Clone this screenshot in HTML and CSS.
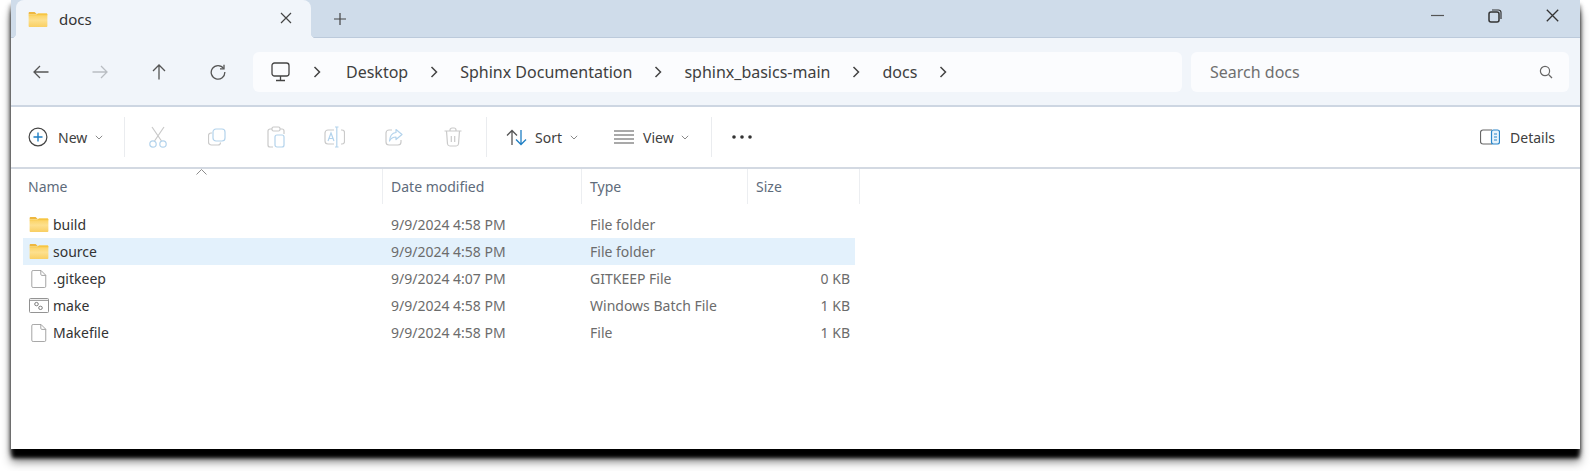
FILE: index.html
```html
<!DOCTYPE html>
<html lang="en">
<head>
    <meta charset="UTF-8">
    <title>docs - File Explorer</title>
    <link rel="stylesheet" href="styles.css">
</head>
<body>
    <svg class="sprite" width="0" height="0">
        <defs>
            <linearGradient id="folderFill" x1="0" y1="0" x2="0" y2="1">
                <stop offset="0" stop-color="#fbd05a"/>
                <stop offset="0.5" stop-color="#fde08e"/>
                <stop offset="1" stop-color="#f9cf63"/>
            </linearGradient>
            <symbol id="folder" viewBox="0 0 20 16">
                <path d="M0 1.2C0 .5.5 0 1.2 0h5.2l2.2 2.2H0z" fill="#eeb73f"/>
                <path d="M0 2.6h8.4L10 1.6h8.8c.7 0 1.2.5 1.2 1.2v12c0 .7-.5 1.2-1.2 1.2H1.2C.5 16 0 15.500 0 14.800z" fill="url(#folderFill)"/>
                <path d="M0 2.600h8.600L10 1.600h8.800c.7 0 1.200.5 1.200 1.200v.6H0z" fill="#f6c544"/>
            </symbol>
            <symbol id="page" viewBox="0 0 16 20">
                <path d="M1.500.5h8.700l5.300 5.300v12.200a1.500 1.500 0 0 1-1.500 1.500h-12.500a1.500 1.500 0 0 1-1.500-1.500v-16a1.500 1.500 0 0 1 1.500-1.500z" fill="#fff" stroke="#9a9a9a"/>
                <path d="M10 .5v4.300c0 .7.500 1.200 1.200 1.200h4.300" fill="none" stroke="#9a9a9a"/>
            </symbol>
            <symbol id="caret" viewBox="0 0 8 5">
                <path d="M.8.8 4 4l3.200-3.200" fill="none" stroke="#8a8a8a"/>
            </symbol>
            <symbol id="chevron" viewBox="0 0 8 12">
                <path d="M1.500 1 6.500 6l-5 5" fill="none" stroke="#444" stroke-width="1.500"/>
            </symbol>
        </defs>
    </svg>

    <div class="window">
        <div class="titlebar">
            <div class="tab">
                <svg class="tab-icon" width="20" height="15"><use href="#folder"/></svg>
                <span class="tab-title">docs</span>
                <svg class="tab-close" width="12" height="12" viewBox="0 0 12 12"><path d="M1 1l10 10M11 1 1 11" stroke="#444" stroke-width="1.200"/></svg>
            </div>
            <svg class="tab-add" width="14" height="14" viewBox="0 0 14 14"><path d="M7 1v12M1 7h12" stroke="#444" stroke-width="1.200"/></svg>
            <div class="win-controls">
                <svg width="13" height="13" viewBox="0 0 13 13"><path d="M0 6.500h13" stroke="#555" stroke-width="1.200"/></svg>
                <svg width="14" height="14" viewBox="0 0 14 14"><rect x="1" y="3" width="10" height="10" rx="2" fill="none" stroke="#333" stroke-width="1.500"/><path d="M4 1h6.500A2.500 2.500 0 0 1 13 3.500V10" fill="none" stroke="#333" stroke-width="1.200"/></svg>
                <svg width="13" height="13" viewBox="0 0 13 13"><path d="M.8.800l11.400 11.400M12.200.800.800 12.200" stroke="#333" stroke-width="1.300"/></svg>
            </div>
        </div>

        <div class="navbar">
            <div class="nav-btn"><svg width="16" height="14" viewBox="0 0 16 14"><path d="M15.500 7H1M7 1 1 7l6 6" fill="none" stroke="#555" stroke-width="1.300"/></svg></div>
            <div class="nav-btn"><svg width="16" height="14" viewBox="0 0 16 14"><path d="M.5 7H15M9 1l6 6-6 6" fill="none" stroke="#b9bdc2" stroke-width="1.300"/></svg></div>
            <div class="nav-btn"><svg width="14" height="16" viewBox="0 0 14 16"><path d="M7 15.500V1M1 7l6-6 6 6" fill="none" stroke="#555" stroke-width="1.300"/></svg></div>
            <div class="nav-btn"><svg width="16" height="16" viewBox="0 0 16 16"><path d="M13.600 4.500A6.800 6.800 0 1 0 14.800 8" fill="none" stroke="#555" stroke-width="1.300"/><path d="M14 .8v4h-4" fill="none" stroke="#555" stroke-width="1.300"/></svg></div>

            <div class="address">
                <svg class="address-pc" width="19" height="20" viewBox="0 0 19 20"><rect x="1" y="1" width="17" height="13" rx="2.500" fill="none" stroke="#444" stroke-width="1.300"/><path d="M9.500 14v4M5 18.500h9" stroke="#444" stroke-width="1.300"/></svg>
                <svg class="crumb-sep" width="8" height="12"><use href="#chevron"/></svg>
                <span class="crumb crumb-first">Desktop</span>
                <svg class="crumb-sep" width="8" height="12"><use href="#chevron"/></svg>
                <span class="crumb">Sphinx Documentation</span>
                <svg class="crumb-sep" width="8" height="12"><use href="#chevron"/></svg>
                <span class="crumb">sphinx_basics-main</span>
                <svg class="crumb-sep" width="8" height="12"><use href="#chevron"/></svg>
                <span class="crumb">docs</span>
                <svg class="crumb-sep" width="8" height="12"><use href="#chevron"/></svg>
            </div>

            <div class="search">
                <span class="search-text">Search docs</span>
                <svg width="14" height="14" viewBox="0 0 14 14"><circle cx="6" cy="6" r="4.600" fill="none" stroke="#666" stroke-width="1.200"/><path d="M9.400 9.400 13 13" stroke="#666" stroke-width="1.300"/></svg>
            </div>
        </div>

        <div class="toolbar">
            <div class="tool tool-new">
                <svg width="20" height="20" viewBox="0 0 20 20"><circle cx="10" cy="10" r="8.900" fill="none" stroke="#444" stroke-width="1.200"/><path d="M10 5.500v9M5.500 10h9" stroke="#1f7fc4" stroke-width="1.400"/></svg>
                <span class="tool-label">New</span>
                <svg class="tool-caret" width="8" height="5"><use href="#caret"/></svg>
            </div>
            <div class="tool-sep"></div>
            <div class="tool-group">
                <div class="tool tool-icon"><svg width="18" height="22" viewBox="0 0 18 22"><path d="M3 1l9.500 14M15 1 5.500 15" fill="none" stroke="#c9c9c9" stroke-width="1.200"/><circle cx="4" cy="18" r="3.200" fill="none" stroke="#b3d3ec" stroke-width="1.200"/><circle cx="14" cy="18" r="3.200" fill="none" stroke="#b3d3ec" stroke-width="1.200"/></svg></div>
                <div class="tool tool-icon"><svg width="18" height="18" viewBox="0 0 18 18"><path d="M4 5H3a2.500 2.500 0 0 0-2.500 2.500V14A3 3 0 0 0 3.500 17H10a2.500 2.500 0 0 0 2.500-2.500" fill="none" stroke="#cacaca" stroke-width="1.200"/><rect x="5" y="1" width="12" height="12" rx="3" fill="#fff" stroke="#b3d3ec" stroke-width="1.200"/></svg></div>
                <div class="tool tool-icon"><svg width="18" height="22" viewBox="0 0 18 22"><path d="M5 3H3a2 2 0 0 0-2 2v14a2 2 0 0 0 2 2h3M13 3h2a2 2 0 0 1 2 2v3" fill="none" stroke="#cacaca" stroke-width="1.200"/><rect x="5" y="1" width="8" height="4" rx="1.500" fill="#fff" stroke="#cacaca" stroke-width="1.200"/><rect x="8" y="9" width="9" height="12" rx="2" fill="#fff" stroke="#b3d3ec" stroke-width="1.200"/></svg></div>
                <div class="tool tool-icon"><svg width="21" height="22" viewBox="0 0 21 22"><path d="M10 4H4a3 3 0 0 0-3 3v8a3 3 0 0 0 3 3h6M17 4h1a2.500 2.500 0 0 1 2.500 2.500v9A2.500 2.500 0 0 1 18 18h-1" fill="none" stroke="#cacaca" stroke-width="1.200"/><path d="M11 1h3.500M12.800 1v20M11 21h3.500" fill="none" stroke="#b3d3ec" stroke-width="1.200"/><path d="M4 15l3-8 3 8M5 12.500h4" fill="none" stroke="#b3d3ec" stroke-width="1.200"/></svg></div>
                <div class="tool tool-icon"><svg width="18" height="18" viewBox="0 0 18 18"><path d="M7 2H4a3 3 0 0 0-3 3v9a3 3 0 0 0 3 3h9a3 3 0 0 0 3-3v-2" fill="none" stroke="#cacaca" stroke-width="1.200"/><path d="M11 1.500 17 6.500l-6 5V9C8 9 6 10 4.500 13 4.800 8.500 7 5 11 4.500z" fill="#fff" stroke="#b3d3ec" stroke-width="1.200" stroke-linejoin="round"/></svg></div>
                <div class="tool tool-icon"><svg width="18" height="20" viewBox="0 0 18 20"><path d="M.5 4h17M6 4V3a2 2 0 0 1 2-2h2a2 2 0 0 1 2 2v1M2.500 4l1 13a2.500 2.500 0 0 0 2.500 2h6a2.500 2.500 0 0 0 2.500-2l1-13M7.300 9v6M10.700 9v6" fill="none" stroke="#cacaca" stroke-width="1.200"/></svg></div>
            </div>
            <div class="tool-sep"></div>
            <div class="tool tool-sort">
                <svg width="21" height="17" viewBox="0 0 21 17"><path d="M6 16V1.500M1 6.500l5-5 5 5" fill="none" stroke="#555" stroke-width="1.300"/><path d="M15 1v14.500M10 10.500l5 5 5-5" fill="none" stroke="#1f7fc4" stroke-width="1.300"/></svg>
                <span class="tool-label">Sort</span>
                <svg class="tool-caret" width="8" height="5"><use href="#caret"/></svg>
            </div>
            <div class="tool tool-view">
                <svg width="20" height="14" viewBox="0 0 20 14"><path d="M0 1h20M0 5h20M0 9h20M0 13h20" stroke="#555" stroke-width="1.100"/></svg>
                <span class="tool-label">View</span>
                <svg class="tool-caret" width="8" height="5"><use href="#caret"/></svg>
            </div>
            <div class="tool-sep"></div>
            <div class="tool tool-more">
                <svg width="20" height="4" viewBox="0 0 20 4"><circle cx="2" cy="2" r="1.800" fill="#333"/><circle cx="10" cy="2" r="1.800" fill="#333"/><circle cx="18" cy="2" r="1.800" fill="#333"/></svg>
            </div>
            <div class="tool tool-details">
                <svg width="20" height="16" viewBox="0 0 20 16"><path d="M12 1H3a2.500 2.500 0 0 0-2.500 2.500v9A2.500 2.500 0 0 0 3 15h9" fill="none" stroke="#666" stroke-width="1.200"/><rect x="11.500" y="1" width="8" height="14" rx="2" fill="#e8f3fb" stroke="#2b86c9" stroke-width="1.200"/><path d="M14 5h3M14 8h3M14 11h3" stroke="#2b86c9"/></svg>
                <span class="tool-label">Details</span>
            </div>
        </div>

        <div class="list-head">
            <div class="head-cell head-name">Name<span class="sort-mark"><svg width="11" height="6" viewBox="0 0 11 6"><path d="M.5 5.500l5-5 5 5" fill="none" stroke="#8c8c8c"/></svg></span></div>
            <div class="head-cell">Date modified</div>
            <div class="head-cell">Type</div>
            <div class="head-cell">Size</div>
        </div>

        <div class="list">
            <div class="row">
                <div class="cell-name"><svg class="file-icon" width="20" height="15"><use href="#folder"/></svg>build</div>
                <div class="cell">9/9/2024 4:58 PM</div>
                <div class="cell">File folder</div>
                <div class="cell cell-size"></div>
            </div>
            <div class="row row-selected">
                <div class="cell-name"><svg class="file-icon" width="20" height="15"><use href="#folder"/></svg>source</div>
                <div class="cell">9/9/2024 4:58 PM</div>
                <div class="cell">File folder</div>
                <div class="cell cell-size"></div>
            </div>
            <div class="row">
                <div class="cell-name"><svg class="file-icon" width="16" height="18"><use href="#page"/></svg>.gitkeep</div>
                <div class="cell">9/9/2024 4:07 PM</div>
                <div class="cell">GITKEEP File</div>
                <div class="cell cell-size">0 KB</div>
            </div>
            <div class="row">
                <div class="cell-name"><svg class="file-icon" width="20" height="15" viewBox="0 0 20 16" preserveAspectRatio="none"><rect x=".5" y=".5" width="19" height="15" rx="1" fill="#fff" stroke="#8d8d8d"/><path d="M.5 2.500h19" stroke="#8d8d8d"/><circle cx="7.500" cy="6.500" r="1.800" fill="none" stroke="#777"/><circle cx="11.500" cy="10.500" r="1.800" fill="none" stroke="#777"/></svg>make</div>
                <div class="cell">9/9/2024 4:58 PM</div>
                <div class="cell">Windows Batch File</div>
                <div class="cell cell-size">1 KB</div>
            </div>
            <div class="row">
                <div class="cell-name"><svg class="file-icon" width="16" height="18"><use href="#page"/></svg>Makefile</div>
                <div class="cell">9/9/2024 4:58 PM</div>
                <div class="cell">File</div>
                <div class="cell cell-size">1 KB</div>
            </div>
        </div>
    </div>
</body>
</html>
```

FILE: styles.css
```css
html, body {
    margin: 0;
    height: 100%;
    background-color: #fff;
    overflow: hidden;
}
body {
    font-family: "Noto Sans", "Open Sans", sans-serif;
    color: #333;
}
.sprite {
    display: block;
}
.window {
    width: 1569px;
    height: 449px;
    margin-left: 11px;
    background-color: #fff;
    display: flex;
    flex-direction: column;
    box-shadow: 0 10px 4px -1px #000, 0 13px 9px rgba(0, 0, 0, 0.45), -1px 5px 5px rgba(0, 0, 0, 0.4), 1px 5px 4px rgba(0, 0, 0, 0.28);
}

/* title bar */
.titlebar {
    height: 38px;
    box-sizing: border-box;
    padding-left: 5px;
    background-color: #cfdcea;
    border-bottom: 1px solid #bccadb;
    display: flex;
    align-items: flex-start;
    flex-shrink: 0;
}
.tab {
    position: relative;
    width: 295px;
    height: 38px;
    box-sizing: border-box;
    padding: 0 19px 0 12px;
    background-color: #f1f5fa;
    border-radius: 8px 8px 0 0;
    display: flex;
    align-items: center;
    flex-shrink: 0;
}
/* little flares where the tab meets the bar */
.tab::before,
.tab::after {
    content: "";
    position: absolute;
    bottom: 0;
    width: 5px;
    height: 5px;
}
.tab::before {
    left: -5px;
    background: radial-gradient(circle at 0 0, transparent 5px, #f1f5fa 5.5px);
}
.tab::after {
    right: -5px;
    background: radial-gradient(circle at 100% 0, transparent 5px, #f1f5fa 5.5px);
}
.tab-title {
    margin-left: 11px;
    font-size: 15px;
    color: #333;
    flex: 1;
}
.tab-close {
    margin-top: -2px;
}
.tab-add {
    margin: 12px 0 0 22px;
}
.win-controls {
    margin-left: auto;
    padding: 9px 21px 0 0;
    display: flex;
    gap: 44px;
}

/* nav bar */
.navbar {
    height: 69px;
    box-sizing: border-box;
    background-color: #f1f5fa;
    border-bottom: 2px solid #cdd6e2;
    display: flex;
    align-items: flex-start;
    padding: 14px 11px 0 0;
    flex-shrink: 0;
}
.nav-btn {
    width: 59px;
    height: 40px;
    display: flex;
    align-items: center;
    justify-content: center;
    flex-shrink: 0;
}
.address {
    flex: 1;
    height: 40px;
    margin-left: 6px;
    box-sizing: border-box;
    padding-left: 18px;
    background-color: #fbfcfe;
    border-radius: 6px;
    display: flex;
    align-items: center;
    font-size: 16px;
    color: #404040;
}
.address-pc {
    margin-right: 1px;
}
.crumb-sep {
    margin: 0 22px;
}
.crumb {
    white-space: nowrap;
}
.crumb-first {
    margin-left: 3px;
}
.search {
    width: 378px;
    height: 40px;
    margin-left: 9px;
    box-sizing: border-box;
    padding: 0 16px 0 19px;
    background-color: #fbfcfe;
    border-radius: 6px;
    display: flex;
    align-items: center;
    justify-content: space-between;
    font-size: 16px;
    color: #6f6f6f;
    flex-shrink: 0;
}

/* toolbar */
.toolbar {
    height: 62px;
    box-sizing: border-box;
    background-color: #fff;
    border-bottom: 2px solid #d3d9e2;
    display: flex;
    align-items: center;
    flex-shrink: 0;
}
.tool {
    display: flex;
    align-items: center;
    font-size: 14px;
    color: #404040;
    flex-shrink: 0;
}
.tool-label {
    margin-left: 10px;
}
.tool-caret {
    margin-left: 8px;
}
.tool-sep {
    width: 1px;
    height: 40px;
    background-color: #eaecef;
    flex-shrink: 0;
}
.tool-group {
    padding: 0 4px 0 3px;
    display: flex;
}
.tool-new {
    width: 113px;
    box-sizing: border-box;
    padding-left: 17px;
}
.tool-icon {
    width: 59px;
    justify-content: center;
}
.tool-sort {
    width: 103px;
    box-sizing: border-box;
    padding-left: 19px;
}
.tool-sort .tool-label {
    margin-left: 8px;
}
.tool-view {
    width: 121px;
    box-sizing: border-box;
    padding-left: 24px;
}
.tool-view .tool-label {
    margin-left: 9px;
}
.tool-view .tool-caret {
    margin-left: 7px;
}
.tool-more {
    padding-left: 20px;
}
.tool-details {
    margin-left: auto;
    padding-right: 25px;
}

/* file list */
.list-head {
    display: grid;
    grid-template-columns: 372px 199px 166px 112px;
    height: 35px;
    flex-shrink: 0;
}
.head-cell {
    box-sizing: border-box;
    padding-left: 8px;
    border-right: 1px solid #eceef1;
    font-size: 14px;
    color: #5e6b7b;
    display: flex;
    align-items: center;
}
.head-name {
    padding-left: 17px;
    position: relative;
}
.sort-mark {
    position: absolute;
    left: 185px;
    top: 0;
    line-height: 0;
}
.list {
    margin: 7px 0 0 12px;
    width: 832px;
}
.row {
    display: grid;
    grid-template-columns: 360px 199px 166px 107px;
    height: 27px;
    align-items: center;
    font-size: 14px;
}
.row-selected {
    background-color: #e3f1fc;
}
.cell-name {
    display: flex;
    align-items: center;
    color: #333;
}
.file-icon {
    width: 20px;
    margin: 0 4px 0 6px;
    flex-shrink: 0;
}
.cell {
    padding-left: 8px;
    color: #6c6c6c;
}
.cell-size {
    padding: 0 5px 0 0;
    text-align: right;
}
```
